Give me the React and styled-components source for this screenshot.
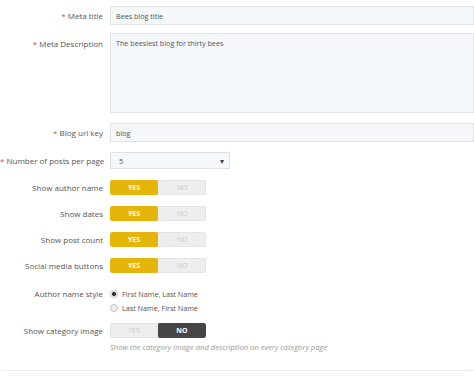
import React from 'react';
import styled, { createGlobalStyle } from 'styled-components';

const GlobalStyle = createGlobalStyle`
  html, body {
    margin: 0;
    padding: 0;
    background: #ffffff;
    font-family: 'Open Sans', 'Noto Sans', sans-serif;
  }
`;

const fields = [
  { label: 'Show author name', value: true },
  { label: 'Show dates', value: true },
  { label: 'Show post count', value: true },
  { label: 'Social media buttons', value: true },
];

function App() {
  return (
    <>
      <GlobalStyle />
      <Form>
        <Row $mb={8}>
          <Label $required>Meta title</Label>
          <Control>
            <Input defaultValue="Bees blog title" />
          </Control>
        </Row>
        <Row $mb={10} $top>
          <Label $required $top>Meta Description</Label>
          <Control>
            <TextArea defaultValue="The beesiest blog for thirty bees" />
          </Control>
        </Row>
        <Row $mb={10}>
          <Label $required>Blog url key</Label>
          <Control>
            <Input defaultValue="blog" />
          </Control>
        </Row>
        <Row $mb={11}>
          <Label $required>Number of posts per page</Label>
          <Control>
            <Select>
              <span>5</span>
              <Caret>▾</Caret>
            </Select>
          </Control>
        </Row>
        {fields.map((f, i) => (
          <Row key={f.label} $mb={i === fields.length - 1 ? 14 : 11}>
            <Label>{f.label}</Label>
            <Control>
              <Toggle>
                <ToggleHalf $on={f.value}>YES</ToggleHalf>
                <ToggleHalf $on={!f.value} $dark>NO</ToggleHalf>
              </Toggle>
            </Control>
          </Row>
        ))}
        <Row $mb={8} $top>
          <Label $top $offset={1}>Author name style</Label>
          <Control>
            <RadioLine>
              <Radio $checked />
              First Name, Last Name
            </RadioLine>
            <RadioLine>
              <Radio />
              Last Name, First Name
            </RadioLine>
          </Control>
        </Row>
        <Row $mb={0} $top>
          <Label $top $offset={2}>Show category image</Label>
          <Control>
            <Toggle>
              <ToggleHalf>YES</ToggleHalf>
              <ToggleHalf $on $dark>NO</ToggleHalf>
            </Toggle>
            <Help>Show the category image and description on every category page</Help>
          </Control>
        </Row>
      </Form>
      <Divider />
      <Footer />
    </>
  );
}

const Form = styled.div`
  padding-top: 6px;
  padding-bottom: 18px;
`;

const Row = styled.div`
  display: flex;
  align-items: ${(p) => (p.$top ? 'flex-start' : 'center')};
  gap: 7px;
  margin-bottom: ${(p) => p.$mb}px;
`;

const Label = styled.div`
  width: 103px;
  flex-shrink: 0;
  text-align: right;
  font-size: 8px;
  line-height: 11px;
  color: #555;
  white-space: nowrap;
  padding-top: ${(p) => (p.$top ? (p.$offset != null ? p.$offset : 5) : 0)}px;

  &::before {
    content: ${(p) => (p.$required ? "'* '" : "''")};
    color: #e34c4c;
  }
`;

const Control = styled.div`
  flex: 1;
  min-width: 0;
`;

const Input = styled.input`
  box-sizing: border-box;
  display: block;
  margin: 0;
  width: 100%;
  height: 19px;
  border: 1px solid #e0e4e6;
  background: #f4f8fa;
  padding: 0 5px;
  font-family: 'Open Sans', sans-serif;
  font-size: 7.2px;
  color: #555;
  outline: none;
`;

const TextArea = styled.textarea`
  box-sizing: border-box;
  display: block;
  margin: 0;
  width: 100%;
  height: 80px;
  border: 1px solid #e0e4e6;
  background: #f4f8fa;
  padding: 4px 5px;
  font-family: 'Open Sans', sans-serif;
  font-size: 7.2px;
  color: #555;
  resize: none;
  outline: none;
`;

const Select = styled.div`
  box-sizing: border-box;
  width: 120px;
  height: 17px;
  border: 1px solid #dde1e3;
  background: #f4f8fa;
  display: flex;
  align-items: center;
  justify-content: space-between;
  padding: 0 5px 0 8px;
  font-size: 7.5px;
  color: #555;
`;

const Caret = styled.span`
  font-size: 8px;
  color: #444;
`;

const Toggle = styled.div`
  display: flex;
  width: 96px;
  height: 15px;
  border-radius: 2px;
  overflow: hidden;
  background: #eeeeee;
  box-shadow: inset 0 0 0 1px #e4e4e4;
`;

const ToggleHalf = styled.div`
  flex: 1;
  display: flex;
  align-items: center;
  justify-content: center;
  font-size: 7px;
  font-weight: ${(p) => (p.$on ? 700 : 400)};
  color: ${(p) => (p.$on ? '#ffffff' : '#c8c8c8')};
  background: ${(p) => (p.$on ? (p.$dark ? '#454545' : '#e5b50a') : 'transparent')};
  border-radius: 2px;
`;

const RadioLine = styled.div`
  display: flex;
  align-items: center;
  gap: 4px;
  height: 14px;
  font-size: 7.2px;
  color: #555;
`;

const Radio = styled.span`
  box-sizing: border-box;
  width: 8px;
  height: 8px;
  border-radius: 50%;
  border: 1px solid #c4c4c4;
  background: ${(p) =>
    p.$checked ? 'radial-gradient(circle, #333 0, #333 1.8px, #f2f2f2 2.3px)' : '#eeeeee'};
`;

const Help = styled.div`
  margin-top: 4px;
  font-size: 7.6px;
  font-style: italic;
  color: #9a9a9a;
`;

const Divider = styled.div`
  height: 1px;
  background: #ededed;
`;

const Footer = styled.div`
  margin: 2px 8px 0;
  height: 10px;
  background: #fafafa;
`;

export default App;
